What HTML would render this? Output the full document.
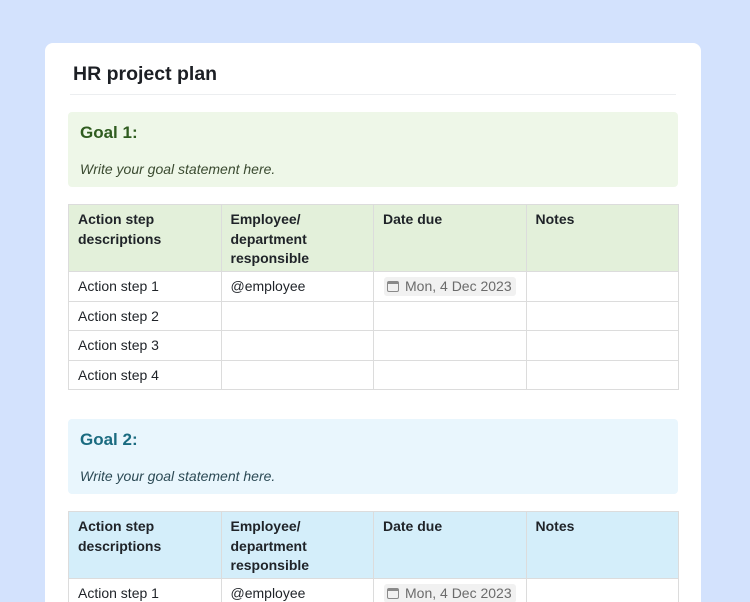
<!DOCTYPE html>
<html style="width:750px;height:602px;overflow:hidden"><head><style>
*{box-sizing:border-box;margin:0;padding:0}
body{width:750px;height:602px;overflow:hidden;background:#d3e2fd;font-family:"Liberation Sans",Arial,sans-serif;color:#1f2328;position:relative}
.card{position:absolute;left:45px;top:43px;width:656px;height:570px;background:#fff;border-radius:8px}
h1{position:absolute;left:73px;top:63px;font-size:19.5px;font-weight:bold;color:#1c1f24}
.rule{position:absolute;left:70px;top:94px;width:606px;height:1px;background:#eceef0}
.goal{position:absolute;left:68px;width:610px;height:75px;border-radius:4px}
.goal b{position:absolute;left:12px;top:11px;font-size:17px}
.goal i{position:absolute;left:12px;top:49px;font-size:14px}
table{position:absolute;left:68px;width:611px;border-collapse:collapse;font-size:14px}
td,th{border:1px solid #dcdcdc;width:152.5px;text-align:left;vertical-align:top;padding:6px 9px 0;height:29.5px}
th{height:67px;padding-top:5px;line-height:19.5px;font-weight:bold}
.pill{display:inline-block;background:#f1f1f1;color:#6b6b6b;padding:1px 4px 2px 3px;border-radius:3px;margin-left:1px;margin-top:-1px}
.cal{display:inline-block;width:12px;height:11px;border:1.3px solid #8a8a8a;border-top-width:3px;border-radius:2px;margin-right:6px;vertical-align:-1px}
</style></head><body>
<div class="card"></div>
<h1>HR project plan</h1>
<div class="rule"></div>
<div class="goal" style="top:112px;background:#eef7e8"><b style="color:#2f5c1f">Goal 1:</b><i style="color:#3a4a30">Write your goal statement here.</i></div>
<table style="top:204px">
<tr style="background:#e3f0da"><th>Action step descriptions</th><th>Employee/ department responsible</th><th>Date due</th><th>Notes</th></tr>
<tr><td>Action step 1</td><td>@employee</td><td><span class="pill"><span class="cal"></span>Mon, 4 Dec 2023</span></td><td></td></tr>
<tr><td>Action step 2</td><td></td><td></td><td></td></tr>
<tr><td>Action step 3</td><td></td><td></td><td></td></tr>
<tr><td>Action step 4</td><td></td><td></td><td></td></tr>
</table>
<div class="goal" style="top:419px;background:#e9f6fd"><b style="color:#1a6b80">Goal 2:</b><i style="color:#2c4a55">Write your goal statement here.</i></div>
<table style="top:511px">
<tr style="background:#d4eefa"><th>Action step descriptions</th><th>Employee/ department responsible</th><th>Date due</th><th>Notes</th></tr>
<tr><td>Action step 1</td><td>@employee</td><td><span class="pill"><span class="cal"></span>Mon, 4 Dec 2023</span></td><td></td></tr>
</table>
</body></html>
